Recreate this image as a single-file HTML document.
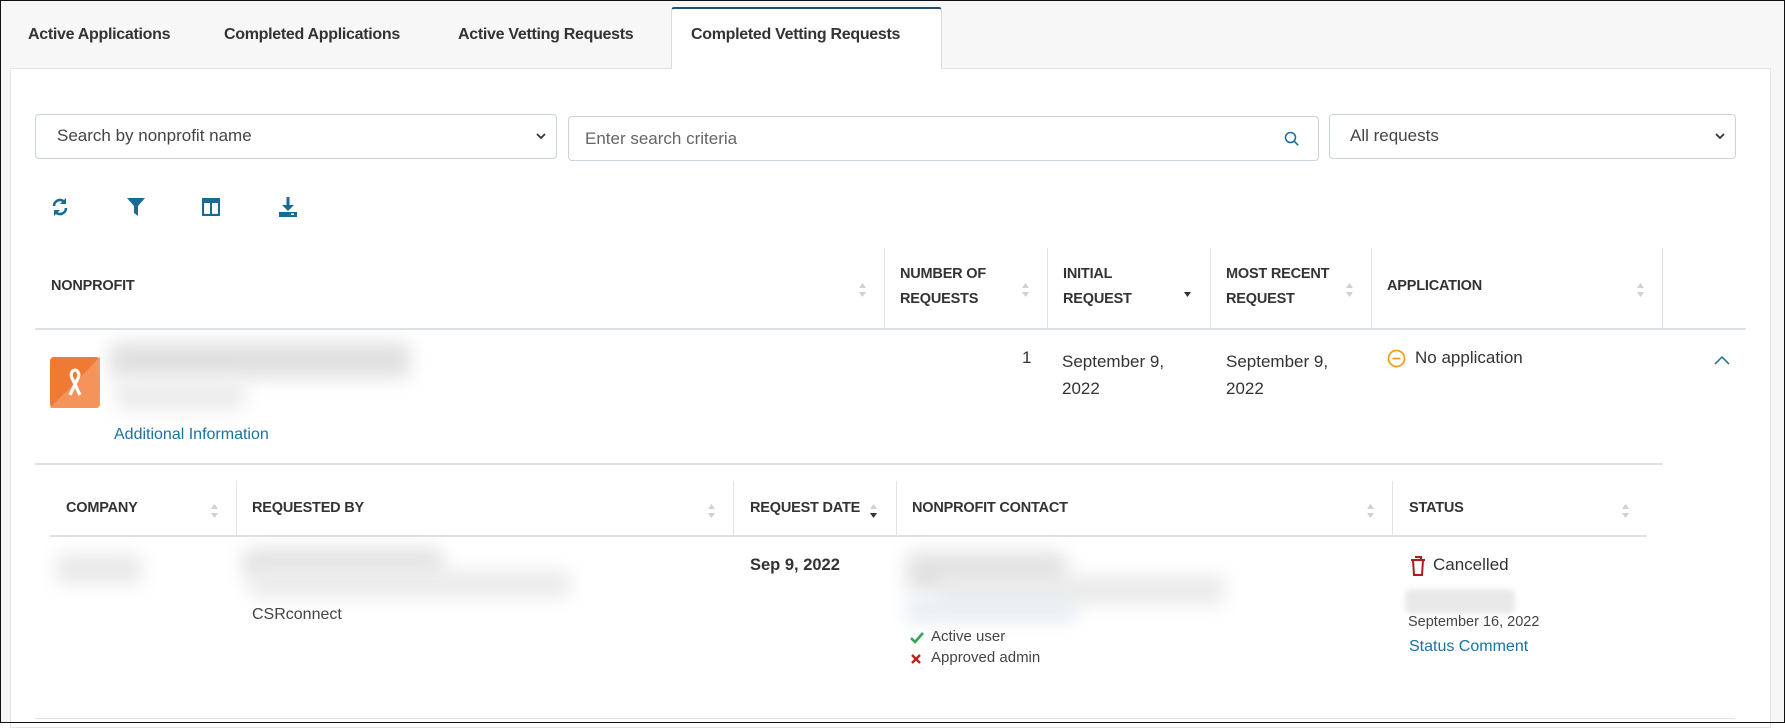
<!DOCTYPE html>
<html><head><style>
*{margin:0;padding:0;box-sizing:border-box}
body{width:1785px;height:723px;position:relative;background:#fff;font-family:"Liberation Sans",sans-serif;color:#333;overflow:hidden}
.a{position:absolute;white-space:nowrap}
.frame{position:absolute;left:0;top:0;width:1785px;height:723px;border:1px solid #111;pointer-events:none}
.tabbar{position:absolute;left:1px;top:1px;width:1783px;height:721px;background:#f7f7f7}
.panel{position:absolute;left:10px;top:68px;width:1761px;height:660px;background:#fff;border:1px solid #e3e3e3}
.tab{position:absolute;top:26px;font-size:16px;color:#333;letter-spacing:-0.3px;font-weight:bold}
.acttab{position:absolute;left:671px;top:7px;width:271px;height:62px;background:#fff;border:1px solid #ddd;border-top:2px solid #1f4e6e;border-bottom:none;border-radius:3px 3px 0 0}
.box{position:absolute;border:1px solid #cdd3da;border-radius:4px;background:#fff;font-size:17px;color:#444}
.th{position:absolute;font-size:14.5px;font-weight:bold;color:#333;line-height:25px;letter-spacing:-0.2px}
.vl{position:absolute;width:1px;background:#e3e3e3}
.hl{position:absolute;height:2px;background:#dde1e5}
.sa{position:absolute}
.txt{position:absolute;font-size:17px;color:#333;white-space:nowrap}
.blur{position:absolute;background:#e9e9e9;filter:blur(9px);border-radius:6px}
.link{color:#1a73a0}
</style></head><body>
<div class="tabbar"></div>
<div class="panel"></div>
<div class="acttab"></div>
<div class="tab" style="left:28px">Active Applications</div>
<div class="tab" style="left:224px">Completed Applications</div>
<div class="tab" style="left:458px">Active Vetting Requests</div>
<div class="tab" style="left:691px">Completed Vetting Requests</div>

<div class="box" style="left:35px;top:114px;width:522px;height:45px"><span class="a" style="left:21px;top:11px">Search by nonprofit name</span>
<svg class="a" style="right:10px;top:17px" width="10" height="8" viewBox="0 0 10 8"><path d="M1 2l4 4 4-4" fill="none" stroke="#333" stroke-width="1.8"/></svg></div>
<div class="box" style="left:568px;top:116px;width:751px;height:45px"><span class="a" style="left:16px;top:12px;color:#666">Enter search criteria</span>
<svg class="a" style="right:18px;top:14px" width="16" height="16" viewBox="0 0 16 16"><circle cx="6.5" cy="6.5" r="5" fill="none" stroke="#1a6a96" stroke-width="1.5"/><path d="M10.2 10.2l4 4" stroke="#1a6a96" stroke-width="1.5"/></svg></div>
<div class="box" style="left:1329px;top:114px;width:407px;height:45px"><span class="a" style="left:20px;top:11px">All requests</span>
<svg class="a" style="right:10px;top:17px" width="10" height="8" viewBox="0 0 10 8"><path d="M1 2l4 4 4-4" fill="none" stroke="#333" stroke-width="1.8"/></svg></div>

<svg class="a" style="left:51px;top:197px" width="18" height="20" viewBox="0 0 18 20"><path d="M3 9a6 6 0 0 1 10.5-4" fill="none" stroke="#1a6a96" stroke-width="2.6"/><path d="M15 1v6h-6z" fill="#1a6a96"/><path d="M15 11a6 6 0 0 1-10.5 4" fill="none" stroke="#1a6a96" stroke-width="2.6"/><path d="M3 19v-6h6z" fill="#1a6a96"/></svg>
<svg class="a" style="left:127px;top:197px" width="18" height="20" viewBox="0 0 18 20"><path d="M0 1h18l-7 8v10l-4-3v-7z" fill="#1a6a96"/></svg>
<svg class="a" style="left:202px;top:198px" width="18" height="18" viewBox="0 0 18 18"><rect x="1" y="1" width="16" height="16" fill="none" stroke="#1a6a96" stroke-width="2.2"/><rect x="1" y="1" width="16" height="4" fill="#1a6a96"/><path d="M9 2v15" stroke="#1a6a96" stroke-width="2"/></svg>
<svg class="a" style="left:278px;top:196px" width="20" height="21" viewBox="0 0 20 21"><path d="M10 1v11" stroke="#1a6a96" stroke-width="3"/><path d="M4 9l6 6 6-6z" fill="#1a6a96"/><path d="M1 16h18v5H1z" fill="#1a6a96"/><rect x="13" y="17.5" width="3" height="1.5" fill="#fff"/></svg>

<div class="vl" style="left:884px;top:248px;height:81px"></div>
<div class="vl" style="left:1047px;top:248px;height:81px"></div>
<div class="vl" style="left:1210px;top:248px;height:81px"></div>
<div class="vl" style="left:1371px;top:248px;height:81px"></div>
<div class="vl" style="left:1662px;top:248px;height:81px"></div>
<div class="hl" style="left:35px;top:328px;width:1711px"></div>
<div class="th" style="left:51px;top:274px">NONPROFIT</div>
<div class="th" style="left:900px;top:262px">NUMBER OF<br>REQUESTS</div>
<div class="th" style="left:1063px;top:262px">INITIAL<br>REQUEST</div>
<div class="th" style="left:1226px;top:262px">MOST RECENT<br>REQUEST</div>
<div class="th" style="left:1387px;top:274px">APPLICATION</div>
<svg class="sa" style="left:858px;top:282px" width="9" height="16" viewBox="0 0 9 16"><path d="M1 6l3.5-5 3.5 5zM1 10l3.5 5 3.5-5z" fill="#d0d0d0"/></svg>
<svg class="sa" style="left:1021px;top:282px" width="9" height="16" viewBox="0 0 9 16"><path d="M1 6l3.5-5 3.5 5zM1 10l3.5 5 3.5-5z" fill="#d0d0d0"/></svg>
<svg class="sa" style="left:1183px;top:282px" width="9" height="16" viewBox="0 0 9 16"><path d="M1 10l3.5 5 3.5-5z" fill="#333"/></svg>
<svg class="sa" style="left:1345px;top:282px" width="9" height="16" viewBox="0 0 9 16"><path d="M1 6l3.5-5 3.5 5zM1 10l3.5 5 3.5-5z" fill="#d0d0d0"/></svg>
<svg class="sa" style="left:1636px;top:282px" width="9" height="16" viewBox="0 0 9 16"><path d="M1 6l3.5-5 3.5 5zM1 10l3.5 5 3.5-5z" fill="#d0d0d0"/></svg>

<svg class="a" style="left:50px;top:357px" width="50" height="51" viewBox="0 0 50 51"><rect width="50" height="51" rx="4" fill="#ee7a33"/><path d="M50 0v47a4 4 0 0 1-4 4H0z" fill="#f4945a"/><path d="M20 38L28.5 20A3.8 5 0 1 0 21.5 20L30 38" fill="none" stroke="#fff" stroke-width="3.2" stroke-linejoin="round"/></svg>
<div class="blur" style="left:110px;top:342px;width:300px;height:36px;background:#e0e0e0"></div>
<div class="blur" style="left:115px;top:380px;width:130px;height:30px;background:#ececec"></div>
<div class="txt link" style="left:114px;top:426px;font-size:16px">Additional Information</div>
<div class="txt" style="left:1022px;top:348px">1</div>
<div class="txt" style="left:1062px;top:348px;line-height:27px">September 9,<br>2022</div>
<div class="txt" style="left:1226px;top:348px;line-height:27px">September 9,<br>2022</div>
<svg class="a" style="left:1387px;top:349px" width="19" height="19" viewBox="0 0 19 19"><circle cx="9.5" cy="9.5" r="8" fill="none" stroke="#f0a020" stroke-width="1.8"/><path d="M5.5 9.5h8" stroke="#f0a020" stroke-width="1.8"/></svg>
<div class="txt" style="left:1415px;top:348px">No application</div>
<svg class="a" style="left:1714px;top:355px" width="16" height="10" viewBox="0 0 16 10"><path d="M1 9l7-7 7 7" fill="none" stroke="#1a6a96" stroke-width="1.5"/></svg>

<div class="hl" style="left:35px;top:463px;width:1628px"></div>
<div class="vl" style="left:236px;top:481px;height:55px"></div>
<div class="vl" style="left:733px;top:481px;height:55px"></div>
<div class="vl" style="left:896px;top:481px;height:55px"></div>
<div class="vl" style="left:1392px;top:481px;height:55px"></div>
<div class="hl" style="left:50px;top:535px;width:1597px"></div>
<div class="th" style="left:66px;top:496px">COMPANY</div>
<div class="th" style="left:252px;top:496px">REQUESTED BY</div>
<div class="th" style="left:750px;top:496px">REQUEST DATE</div>
<div class="th" style="left:912px;top:496px">NONPROFIT CONTACT</div>
<div class="th" style="left:1409px;top:496px">STATUS</div>
<svg class="sa" style="left:210px;top:503px" width="9" height="16" viewBox="0 0 9 16"><path d="M1 6l3.5-5 3.5 5zM1 10l3.5 5 3.5-5z" fill="#d0d0d0"/></svg>
<svg class="sa" style="left:707px;top:503px" width="9" height="16" viewBox="0 0 9 16"><path d="M1 6l3.5-5 3.5 5zM1 10l3.5 5 3.5-5z" fill="#d0d0d0"/></svg>
<svg class="sa" style="left:869px;top:503px" width="9" height="16" viewBox="0 0 9 16"><path d="M1 6l3.5-5 3.5 5z" fill="#d0d0d0"/><path d="M1 10l3.5 5 3.5-5z" fill="#333"/></svg>
<svg class="sa" style="left:1366px;top:503px" width="9" height="16" viewBox="0 0 9 16"><path d="M1 6l3.5-5 3.5 5zM1 10l3.5 5 3.5-5z" fill="#d0d0d0"/></svg>
<svg class="sa" style="left:1621px;top:503px" width="9" height="16" viewBox="0 0 9 16"><path d="M1 6l3.5-5 3.5 5zM1 10l3.5 5 3.5-5z" fill="#d0d0d0"/></svg>

<div class="blur" style="left:56px;top:554px;width:86px;height:30px"></div>
<div class="blur" style="left:243px;top:548px;width:200px;height:30px;background:#e3e3e3"></div>
<div class="blur" style="left:250px;top:570px;width:320px;height:28px;background:#ebebeb"></div>
<div class="txt" style="left:252px;top:606px;font-size:16px;color:#444">CSRconnect</div>
<div class="txt" style="left:750px;top:556px;font-weight:bold;font-size:16.5px">Sep 9, 2022</div>
<div class="blur" style="left:906px;top:552px;width:160px;height:40px;background:#e2e2e2"></div>
<div class="blur" style="left:940px;top:575px;width:285px;height:30px;background:#ebebeb"></div>
<div class="blur" style="left:906px;top:598px;width:170px;height:24px;background:#e6eef2"></div>
<svg class="a" style="left:910px;top:632px" width="14" height="12" viewBox="0 0 14 12"><path d="M1 6l4 4 8-9" fill="none" stroke="#2fa84f" stroke-width="2.6"/></svg>
<div class="txt" style="left:931px;top:628px;font-size:15px;color:#444">Active user</div>
<svg class="a" style="left:910px;top:653px" width="12" height="12" viewBox="0 0 12 12"><path d="M2 2l8 8M10 2l-8 8" stroke="#c0201e" stroke-width="2.4"/></svg>
<div class="txt" style="left:931px;top:649px;font-size:15px;color:#444">Approved admin</div>
<svg class="a" style="left:1410px;top:556px" width="16" height="20" viewBox="0 0 16 20"><path d="M5 1h6v2M1 4h14M3 4l1 15h8l1-15" fill="none" stroke="#b01c1c" stroke-width="2"/></svg>
<div class="txt" style="left:1433px;top:555px">Cancelled</div>
<div class="blur" style="left:1405px;top:589px;width:110px;height:25px;filter:blur(3px)"></div>
<div class="txt" style="left:1408px;top:614px;font-size:14.5px;color:#444">September 16, 2022</div>
<div class="txt link" style="left:1409px;top:638px;font-size:16px">Status Comment</div>

<div class="hl" style="left:35px;top:718px;width:1700px;height:1px"></div>
<div class="frame"></div>
</body></html>
